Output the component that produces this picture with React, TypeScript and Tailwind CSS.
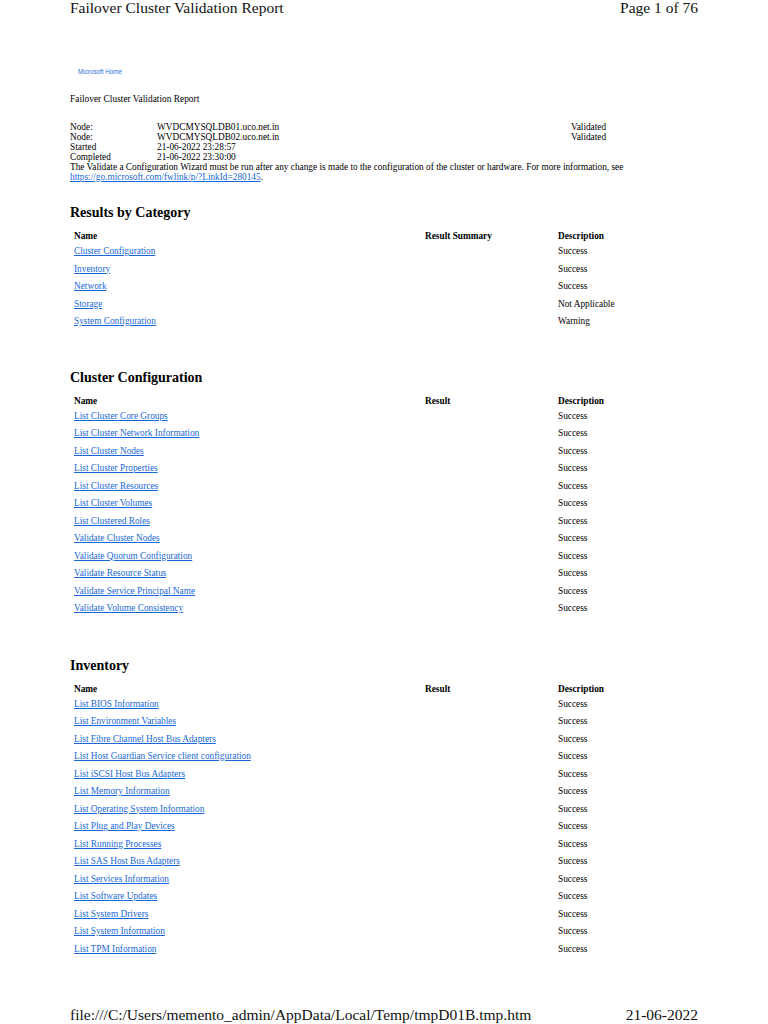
import React from 'react';

const serif = { fontFamily: '"Liberation Serif", "Times New Roman", serif' };

type Row = { name: string; result?: string; desc: string };

const CATEGORIES: Row[] = [
    { name: 'Cluster Configuration', desc: 'Success' },
    { name: 'Inventory', desc: 'Success' },
    { name: 'Network', desc: 'Success' },
    { name: 'Storage', desc: 'Not Applicable' },
    { name: 'System Configuration', desc: 'Warning' },
];

const CLUSTER_CONFIG: Row[] = [
    'List Cluster Core Groups',
    'List Cluster Network Information',
    'List Cluster Nodes',
    'List Cluster Properties',
    'List Cluster Resources',
    'List Cluster Volumes',
    'List Clustered Roles',
    'Validate Cluster Nodes',
    'Validate Quorum Configuration',
    'Validate Resource Status',
    'Validate Service Principal Name',
    'Validate Volume Consistency',
].map((name) => ({ name, desc: 'Success' }));

const INVENTORY: Row[] = [
    'List BIOS Information',
    'List Environment Variables',
    'List Fibre Channel Host Bus Adapters',
    'List Host Guardian Service client configuration',
    'List iSCSI Host Bus Adapters',
    'List Memory Information',
    'List Operating System Information',
    'List Plug and Play Devices',
    'List Running Processes',
    'List SAS Host Bus Adapters',
    'List Services Information',
    'List Software Updates',
    'List System Drivers',
    'List System Information',
    'List TPM Information',
].map((name) => ({ name, desc: 'Success' }));

const ResultTable: React.FC<{ title: string; resultLabel: string; rows: Row[]; className: string }> = ({ title, resultLabel, rows, className }) => (
    <section className={className}>
        <h2 className="text-[14px] leading-[16px] font-bold text-black">{title}</h2>
        <div className="mt-[8px] grid grid-cols-[351px_133px_1fr] pl-[4px] text-[9.3px] leading-[14px] font-bold text-black">
            <span>Name</span>
            <span>{resultLabel}</span>
            <span>Description</span>
        </div>
        <div className="pt-[1px]">
            {rows.map((r) => (
                <div key={r.name} className="grid grid-cols-[351px_133px_1fr] pl-[4px] h-[17.5px] text-[9.3px] leading-[14px] text-black">
                    <span>
                        <a className="text-[#1868d8] underline underline-offset-[1px]">{r.name}</a>
                    </span>
                    <span>{r.result ?? ''}</span>
                    <span>{r.desc}</span>
                </div>
            ))}
        </div>
    </section>
);

export default function App() {
    return (
        <div className="h-[1024px] w-[768px] bg-white flex flex-col px-[70px] overflow-hidden" style={serif}>
            <header className="flex justify-between items-center h-[16px] text-[15.5px] leading-[16px] text-[#111]">
                <span>Failover Cluster Validation Report</span>
                <span>Page 1 of 76</span>
            </header>

            <div className="mt-[52px] pl-[8px] text-[6.3px] leading-[8px] text-[#1f74e0]" style={{ fontFamily: '"Liberation Sans", Arial, sans-serif' }}>
                Microsoft Home
            </div>

            <div className="mt-[17px] text-[9.4px] leading-[12px] text-black">Failover Cluster Validation Report</div>

            <div className="mt-[17px] text-[9.3px] leading-[10px] text-black">
                <div className="grid grid-cols-[87px_414px_1fr]">
                    <span>Node:</span>
                    <span>WVDCMYSQLDB01.uco.net.in</span>
                    <span>Validated</span>
                    <span>Node:</span>
                    <span>WVDCMYSQLDB02.uco.net.in</span>
                    <span>Validated</span>
                    <span>Started</span>
                    <span>21-06-2022 23:28:57</span>
                    <span />
                    <span>Completed</span>
                    <span>21-06-2022 23:30:00</span>
                    <span />
                </div>
                <p>
                    The Validate a Configuration Wizard must be run after any change is made to the configuration of the cluster or hardware. For more information, see
                    <br />
                    <a className="text-[#1868d8] underline">https://go.microsoft.com/fwlink/p/?LinkId=280145</a>.
                </p>
            </div>

            <ResultTable className="mt-[23px]" title="Results by Category" resultLabel="Result Summary" rows={CATEGORIES} />
            <ResultTable className="mt-[38px]" title="Cluster Configuration" resultLabel="Result" rows={CLUSTER_CONFIG} />
            <ResultTable className="mt-[39px]" title="Inventory" resultLabel="Result" rows={INVENTORY} />

            <footer className="mt-auto pb-[1px] flex justify-between items-center h-[17px] text-[15.5px] leading-[16px] text-[#111]">
                <span>file:///C:/Users/memento_admin/AppData/Local/Temp/tmpD01B.tmp.htm</span>
                <span>21-06-2022</span>
            </footer>
        </div>
    );
}
